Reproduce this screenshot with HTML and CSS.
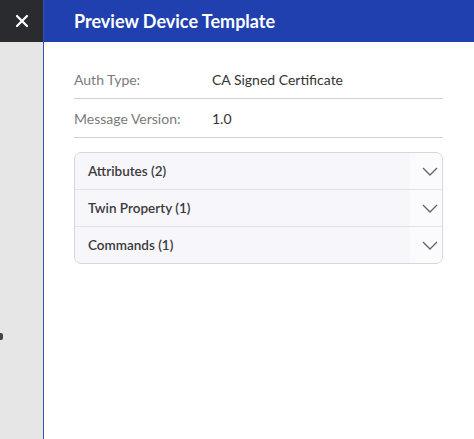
FILE: index.html
```html
<!DOCTYPE html>
<html>
<head>
<meta charset="utf-8">
<link rel="stylesheet" href="styles.css">
</head>
<body>
<div class="app">
  <aside class="side">
    <div class="close">
      <svg width="14" height="14" viewBox="0 0 14 14"><path d="M2 2 L12 12 M12 2 L2 12" stroke="#fff" stroke-width="2.2" stroke-linecap="round"/></svg>
    </div>
    <div class="side-body"><span class="mark"></span></div>
  </aside>
  <main class="panel">
    <header class="head">Preview Device Template</header>
    <section class="content">
      <div class="row"><span class="label">Auth Type:</span><span class="value">CA Signed Certificate</span></div>
      <div class="row"><span class="label">Message Version:</span><span class="value">1.0</span></div>
      <div class="acc">
        <div class="acc-item"><span class="acc-title">Attributes (2)</span><span class="chev"><svg width="16" height="9" viewBox="0 0 16 9"><path d="M1 1 L8 8 L15 1" fill="none" stroke="#666" stroke-width="1.4"/></svg></span></div>
        <div class="acc-item"><span class="acc-title">Twin Property (1)</span><span class="chev"><svg width="16" height="9" viewBox="0 0 16 9"><path d="M1 1 L8 8 L15 1" fill="none" stroke="#666" stroke-width="1.4"/></svg></span></div>
        <div class="acc-item"><span class="acc-title">Commands (1)</span><span class="chev"><svg width="16" height="9" viewBox="0 0 16 9"><path d="M1 1 L8 8 L15 1" fill="none" stroke="#666" stroke-width="1.4"/></svg></span></div>
      </div>
    </section>
  </main>
</div>
</body>
</html>
```
FILE: styles.css
```css
html, body { margin: 0; padding: 0; }
body { font-family: "Lato", "Open Sans", sans-serif; background: #fff; }
.app { display: flex; width: 474px; height: 439px; overflow: hidden; }
.side { width: 43px; display: flex; flex-direction: column; background: #e6e6e6; }
.close { height: 42px; background: #2a2b2f; display: flex; align-items: center; justify-content: center; }
.side-body { flex: 1; position: relative; }
.mark { position: absolute; left: 0; top: 291px; width: 3px; height: 7px; border-radius: 0 2px 2px 0; background: #444; }
.panel { flex: 1; border-left: 1px solid #3550b8; display: flex; flex-direction: column; }
.head { height: 42px; background: #1f40ae; color: #fff; font-weight: 700; font-size: 18px; display: flex; align-items: center; padding-left: 30px; }
.content { padding: 18px 31px 0 30px; }
.row { display: flex; align-items: center; height: 38px; border-bottom: 1px solid #cfcfd2; font-size: 14px; }
.label { width: 138px; color: #7a7a7a; }
.value { color: #333; }
.acc { margin-top: 14px; border: 1px solid #d6d6dc; border-radius: 7px; background: #f6f6fb; overflow: hidden; }
.acc-item { display: flex; align-items: center; height: 36px; border-bottom: 1px solid #e2e2e8; }
.acc-item:last-child { border-bottom: none; }
.acc-title { flex: 1; padding-left: 13px; font-size: 13.5px; font-weight: 600; color: #3a3a3a; }
.chev { width: 32px; height: 100%; background: #fbfbfd; display: flex; align-items: center; justify-content: flex-end; padding-right: 4px; box-sizing: border-box; }
```
